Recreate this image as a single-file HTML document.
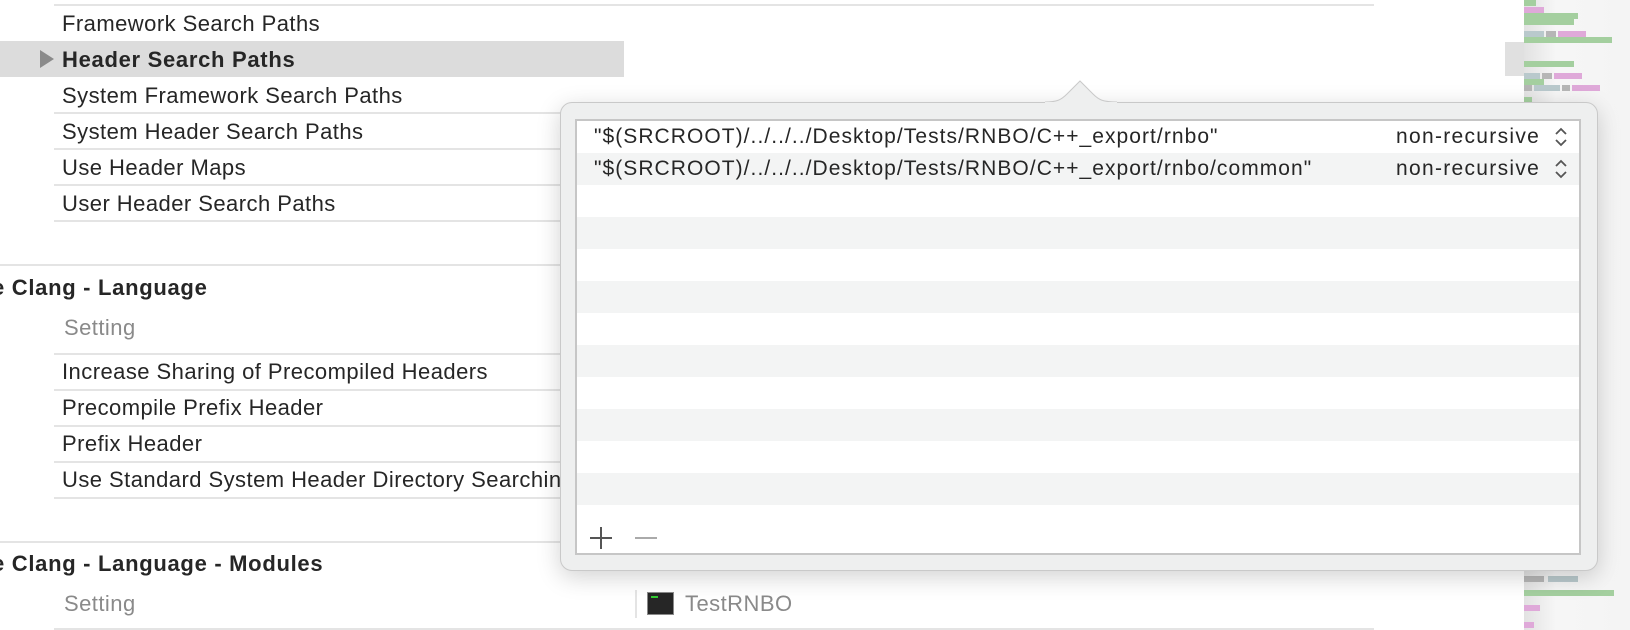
<!DOCTYPE html>
<html><head><meta charset="utf-8"><style>
*{margin:0;padding:0;box-sizing:border-box}
body{width:1630px;height:630px;overflow:hidden;background:#fff;font-family:"Liberation Sans",sans-serif;position:relative;color:#262626}
.abs{position:absolute}
.line{position:absolute;height:2px;background:#e4e4e4;left:54px;width:1320px}
.t{position:absolute;font-size:22px;letter-spacing:0.45px;white-space:nowrap;left:62px;line-height:26px}
.h{font-weight:bold;letter-spacing:0.7px}
.g{color:#8a8a8a}
.mini{position:absolute;left:1524px;top:0;width:106px;height:630px;background:linear-gradient(90deg,#e2e2e2,#f6f6f6 30%,#f4f4f4)}
.b{position:absolute;height:6px}
.gr{background:#a4cf9f}.pk{background:#dfa9d9}.gy{background:#b6b6b6}.bl{background:#b9c9cc}
.pop{position:absolute;left:560px;top:102px;width:1038px;height:469px;background:#eeefef;border:1px solid #c9c9c9;border-radius:12px;box-shadow:0 6px 24px rgba(0,0,0,0.18)}
.tbl{position:absolute;left:575px;top:119px;width:1006px;height:436px;border:2px solid #c6c6c6;background:#fff;overflow:hidden}
.row{position:absolute;left:0;width:100%;height:32px}
.alt{background:#f3f4f4}
.pt{position:absolute;left:17px;font-size:21px;letter-spacing:1.05px;line-height:32px;color:#262626;white-space:nowrap}
.nr{position:absolute;left:819px;font-size:21px;letter-spacing:1.3px;line-height:32px;white-space:nowrap}
</style></head><body>
<div class="abs" style="left:0;top:41px;width:624px;height:36px;background:#dcdcdc"></div>
<div class="abs" style="left:1505px;top:42px;width:19px;height:34px;background:#e0e0e0"></div>
<div class="line" style="top:4px"></div>
<div class="t" style="top:11px">Framework Search Paths</div>
<div class="abs" style="left:40px;top:50px;width:0;height:0;border-left:14px solid #8a8a8a;border-top:9px solid transparent;border-bottom:9px solid transparent"></div>
<div class="t h" style="top:47px">Header Search Paths</div>
<div class="t" style="top:83px">System Framework Search Paths</div>
<div class="line" style="top:112px"></div>
<div class="t" style="top:119px">System Header Search Paths</div>
<div class="line" style="top:148px"></div>
<div class="t" style="top:155px">Use Header Maps</div>
<div class="line" style="top:184px"></div>
<div class="t" style="top:191px">User Header Search Paths</div>
<div class="line" style="top:220px"></div>
<div class="line" style="top:264px;left:0;width:1374px"></div>
<div class="t h" style="top:275px;left:-8px">e Clang - Language</div>
<div class="t g" style="top:315px;left:64px">Setting</div>
<div class="line" style="top:353px"></div>
<div class="t" style="top:359px">Increase Sharing of Precompiled Headers</div>
<div class="line" style="top:389px"></div>
<div class="t" style="top:395px">Precompile Prefix Header</div>
<div class="line" style="top:425px"></div>
<div class="t" style="top:431px">Prefix Header</div>
<div class="line" style="top:461px"></div>
<div class="t" style="top:467px">Use Standard System Header Directory Searching</div>
<div class="line" style="top:497px"></div>
<div class="line" style="top:541px;left:0;width:1374px"></div>
<div class="t h" style="top:551px;left:-8px">e Clang - Language - Modules</div>
<div class="t g" style="top:591px;left:64px">Setting</div>
<div class="abs" style="left:635px;top:590px;width:2px;height:28px;background:#e4e4e4"></div>
<div class="abs" style="left:647px;top:592px;width:27px;height:23px;background:#262626;border:1px solid #8a8a8a"><div class="abs" style="left:3px;top:3px;width:7px;height:2px;background:#3c3"></div></div>
<div class="t g" style="top:591px;left:685px">TestRNBO</div>
<div class="line" style="top:628px"></div>

<div class="mini">
<div class="b gr" style="left:0;top:0;width:12px"></div>
<div class="b pk" style="left:0;top:7px;width:20px"></div>
<div class="b gr" style="left:0;top:13px;width:54px"></div>
<div class="b gr" style="left:0;top:19px;width:50px"></div>
<div class="b bl" style="left:0;top:31px;width:20px"></div><div class="b gy" style="left:22px;top:31px;width:10px"></div><div class="b pk" style="left:34px;top:31px;width:28px"></div>
<div class="b gr" style="left:0;top:37px;width:88px"></div>
<div class="b gr" style="left:0;top:61px;width:50px"></div>
<div class="b bl" style="left:0;top:73px;width:16px"></div><div class="b gy" style="left:18px;top:73px;width:10px"></div><div class="b pk" style="left:30px;top:73px;width:28px"></div>
<div class="b gr" style="left:0;top:79px;width:20px"></div>
<div class="b gy" style="left:0;top:85px;width:8px"></div><div class="b bl" style="left:10px;top:85px;width:26px"></div><div class="b gy" style="left:38px;top:85px;width:8px"></div><div class="b pk" style="left:48px;top:85px;width:28px"></div>
<div class="b gr" style="left:0;top:97px;width:8px"></div>
<div class="b gr" style="left:0;top:310px;width:32px"></div>
<div class="b gr" style="left:0;top:330px;width:32px"></div>
<div class="b gr" style="left:0;top:350px;width:40px"></div>
<div class="b gr" style="left:0;top:366px;width:40px"></div>
<div class="b bl" style="left:0;top:384px;width:40px"></div>
<div class="b gr" style="left:0;top:443px;width:20px"></div>
<div class="b gr" style="left:0;top:534px;width:40px"></div>
<div class="b gr" style="left:0;top:540px;width:40px"></div>
<div class="b bl" style="left:0;top:564px;width:40px"></div>
<div class="b gy" style="left:0;top:576px;width:20px"></div><div class="b bl" style="left:24px;top:576px;width:30px"></div>
<div class="b gr" style="left:0;top:590px;width:90px"></div>
<div class="b pk" style="left:0;top:605px;width:16px"></div>
<div class="b pk" style="left:0;top:622px;width:10px"></div>
</div>

<div class="pop"></div>
<svg class="abs" style="left:1045px;top:78px" width="72" height="26" viewBox="0 0 72 26"><path d="M0 24 C12 24 16 22 22 16 L35 3 L48 16 C54 22 58 24 72 24 L72 26 L0 26Z" fill="#eeefef" stroke="#c9c9c9" stroke-width="1"/><rect x="0" y="24" width="72" height="3" fill="#eeefef"/></svg>
<div class="tbl">
<div class="row" style="top:0"><div class="pt">"$(SRCROOT)/../../../Desktop/Tests/RNBO/C++_export/rnbo"</div><div class="nr">non-recursive</div>
<svg class="abs" style="left:977px;top:6px" width="14" height="20"><path d="M2 7 L7 2 L12 7 M2 13 L7 18 L12 13" fill="none" stroke="#555" stroke-width="1.8"/></svg></div>
<div class="row alt" style="top:32px"><div class="pt">"$(SRCROOT)/../../../Desktop/Tests/RNBO/C++_export/rnbo/common"</div><div class="nr">non-recursive</div>
<svg class="abs" style="left:977px;top:6px" width="14" height="20"><path d="M2 7 L7 2 L12 7 M2 13 L7 18 L12 13" fill="none" stroke="#555" stroke-width="1.8"/></svg></div>
<div class="row" style="top:64px"></div>
<div class="row alt" style="top:96px"></div>
<div class="row" style="top:128px"></div>
<div class="row alt" style="top:160px"></div>
<div class="row" style="top:192px"></div>
<div class="row alt" style="top:224px"></div>
<div class="row" style="top:256px"></div>
<div class="row alt" style="top:288px"></div>
<div class="row" style="top:320px"></div>
<div class="row alt" style="top:352px"></div>
<div class="abs" style="left:13px;top:416px;width:22px;height:2px;background:#555"></div>
<div class="abs" style="left:23px;top:406px;width:2px;height:22px;background:#555"></div>
<div class="abs" style="left:58px;top:416px;width:22px;height:2px;background:#aaa"></div>
</div>
</body></html>
